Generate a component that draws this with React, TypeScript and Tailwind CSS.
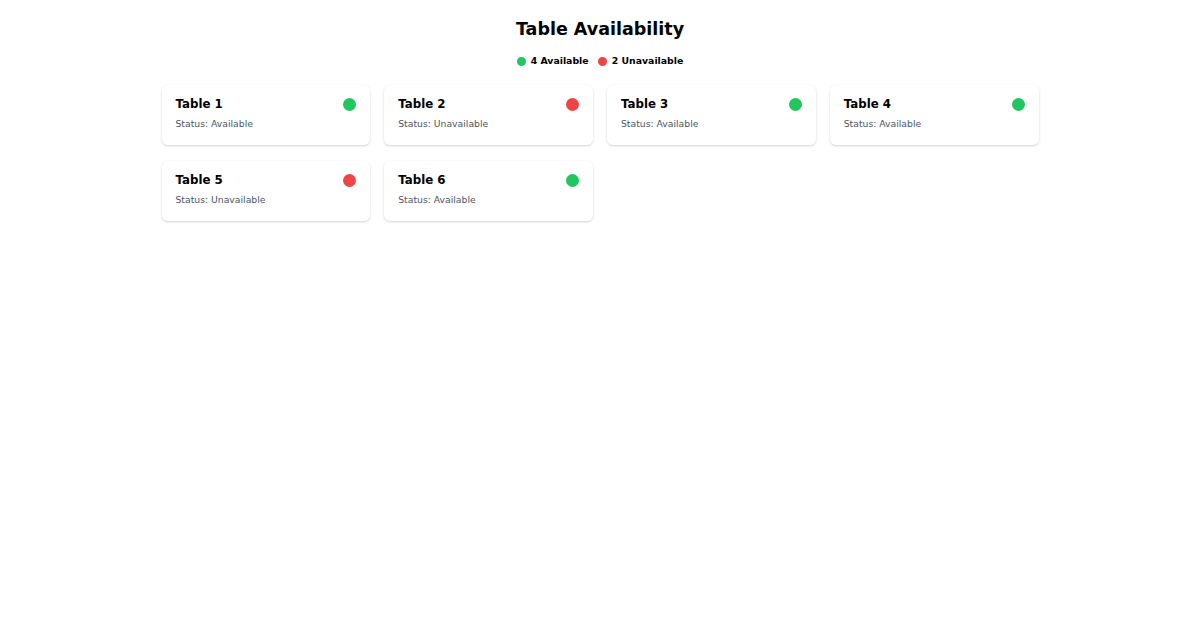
const tables = [
  { id: 1, available: true },
  { id: 2, available: false },
  { id: 3, available: true },
  { id: 4, available: true },
  { id: 5, available: false },
  { id: 6, available: true },
];

export default function App() {
  const availableCount = tables.filter((t) => t.available).length;
  const unavailableCount = tables.length - availableCount;

  return (
    <div className="min-h-screen bg-white font-['DejaVu_Sans',sans-serif] text-black">
      <div className="mx-auto max-w-[877px] pt-[18px]">
        <h1 className="text-center text-[17.5px] font-bold leading-[22px]">
          Table Availability
        </h1>

        <div className="mt-[15px] flex items-center justify-center gap-[9px] text-[9.35px] font-bold leading-3">
          <div className="flex items-center gap-[5px]">
            <span className="h-[9px] w-[9px] rounded-full bg-[#22c55e]" />
            <span>{availableCount} Available</span>
          </div>
          <div className="flex items-center gap-[5px]">
            <span className="h-[9px] w-[9px] rounded-full bg-[#ef4444]" />
            <span>{unavailableCount} Unavailable</span>
          </div>
        </div>

        <div className="mt-[18px] grid grid-cols-4 gap-x-3.5 gap-y-4">
          {tables.map((table) => (
            <div
              key={table.id}
              className="h-[60px] rounded-md bg-white px-3.5 pt-[11px] shadow-[0_1px_3px_rgba(0,0,0,0.12),0_1px_2px_rgba(0,0,0,0.06)]"
            >
              <div className="flex items-center justify-between">
                <span className="text-[11.8px] font-bold leading-4">
                  Table {table.id}
                </span>
                <span
                  className={
                    table.available
                      ? "h-[13px] w-[13px] rounded-full bg-[#22c55e]"
                      : "h-[13px] w-[13px] rounded-full bg-[#ef4444]"
                  }
                />
              </div>
              <p className="mt-[6px] text-[9.25px] leading-3 text-[#4b5563]">
                Status: {table.available ? "Available" : "Unavailable"}
              </p>
            </div>
          ))}
        </div>
      </div>
    </div>
  );
}
